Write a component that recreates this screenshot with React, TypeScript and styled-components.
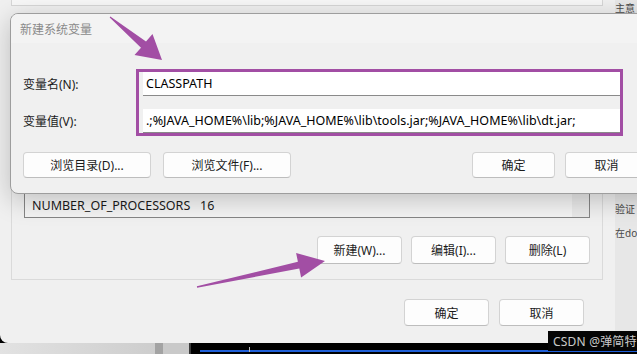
import React from 'react';
import styled, { createGlobalStyle } from 'styled-components';

const UI_FONT = `'Noto Sans', 'Noto Sans CJK SC', sans-serif`;
const PURPLE = '#a24ea4';

const GlobalStyle = createGlobalStyle`
  html, body {
    margin: 0;
    padding: 0;
    background: #000;
  }
  body {
    font-family: ${UI_FONT};
  }
  * {
    box-sizing: border-box;
  }
`;

const systemVars = [
  { name: 'JAVA_HOME', value: 'C:\\Program Files\\Java\\jdk1.8.0_202' },
  { name: 'NUMBER_OF_PROCESSORS', value: '16' },
];

const App = () => {
  return (
    <>
      <GlobalStyle />
      <Screen>
        <BackWindow>
          <BackLine top={-4}>主意</BackLine>
          <BackLine top={177}>验证</BackLine>
          <BackLine top={0}>在do</BackLine>
        </BackWindow>

        <TaskStrip>
          <StripPart width={155} bg="linear-gradient(90deg, #e2e2e2, #cdcdcd)" />
          <StripPart width={8} bg="#a3a3a3" />
          <StripPart width={26} bg="#c9c9c9" />
          <StripPart width={2} bg="#3a3a3a" />
          <TaskTrack>
            <BlueLine />
          </TaskTrack>
        </TaskStrip>

        <ParentWindow>
          <UserGroupTail />
          <SysGroup>
            <ListBox>
              <ListRows>
                {systemVars.map((v) => (
                  <ListRow key={v.name}>
                    <span>{v.name}</span>
                    <span>{v.value}</span>
                  </ListRow>
                ))}
              </ListRows>
              <ScrollTrack />
            </ListBox>
            <ButtonRow gap={9}>
              <Button width={85} height={28}>新建(W)...</Button>
              <Button width={85} height={28}>编辑(I)...</Button>
              <Button width={85} height={28}>删除(L)</Button>
            </ButtonRow>
          </SysGroup>
          <FooterRow>
            <Button width={85} height={27}>确定</Button>
            <Button width={85} height={27}>取消</Button>
          </FooterRow>
        </ParentWindow>

        <Dialog>
          <TitleBar>新建系统变量</TitleBar>
          <DialogBody>
            <FormGrid>
              <FieldLabel>变量名(N):</FieldLabel>
              <TextField>CLASSPATH</TextField>
              <FieldLabel>变量值(V):</FieldLabel>
              <TextField>
                .;%JAVA_HOME%\lib;%JAVA_HOME%\lib\tools.jar;%JAVA_HOME%\lib\dt.jar;
              </TextField>
            </FormGrid>
            <DialogButtons>
              <ButtonGroup gap={12}>
                <Button width={128} height={26}>浏览目录(D)...</Button>
                <Button width={128} height={26}>浏览文件(F)...</Button>
              </ButtonGroup>
              <ButtonGroup gap={10}>
                <Button width={83} height={26}>确定</Button>
                <Button width={83} height={26}>取消</Button>
              </ButtonGroup>
            </DialogButtons>
          </DialogBody>
        </Dialog>

        <Highlight />

        <ArrowLayer viewBox="0 0 637 354">
          <polygon
            fill={PURPLE}
            points="110.3,16.6 146,41.6 152.5,34 162,60 134.5,55 141,47.8 109.7,17.4"
          />
          <polygon
            fill={PURPLE}
            points="197.1,287.7 299.3,268.6 301.1,277.4 325,261 296.1,253 297.9,261.8 196.9,286.3"
          />
        </ArrowLayer>

        <Watermark>CSDN @弹简特</Watermark>
      </Screen>
    </>
  );
};

const Screen = styled.div`
  position: relative;
  width: 637px;
  height: 354px;
  overflow: hidden;
  background: #000;
  font-family: ${UI_FONT};
`;

const BackWindow = styled.div`
  position: absolute;
  left: 590px;
  top: 0;
  width: 60px;
  height: 331px;
  padding-left: 25px;
  background: #e7e7e7;
  display: flex;
  flex-direction: column;
  color: #4a4a4a;
  font-size: 10px;
  line-height: 24px;
  white-space: nowrap;
`;

const BackLine = styled.div<{ top: number }>`
  margin-top: ${({ top }) => top}px;
`;

const TaskStrip = styled.div`
  position: absolute;
  left: 0;
  right: 0;
  bottom: 0;
  height: 11px;
  display: flex;
`;

const StripPart = styled.div<{ width: number; bg: string }>`
  width: ${({ width }) => width}px;
  background: ${({ bg }) => bg};
`;

const TaskTrack = styled.div`
  flex: 1;
  background: #000;
  display: flex;
  align-items: flex-end;
  padding: 0 0 2px 9px;
`;

const BlueLine = styled.div`
  position: relative;
  flex: 1;
  height: 2px;
  background: #1f5fd8;

  &::after {
    content: '';
    position: absolute;
    left: 49px;
    bottom: 0;
    width: 1px;
    height: 5px;
    background: #b8b8b8;
  }
`;

const ParentWindow = styled.div`
  position: absolute;
  left: 0;
  top: 0;
  width: 615px;
  height: 343px;
  padding: 0 12px 0 11px;
  background: #f0f0f0;
  border-radius: 0 0 8px 8px;
  display: flex;
  flex-direction: column;
`;

const UserGroupTail = styled.div`
  height: 6px;
  border: 1px solid #d6d6d6;
  border-top: none;
  background: #f7f7f7;
`;

const SysGroup = styled.div`
  margin-top: 10px;
  height: 264px;
  border: 1px solid #dadada;
  padding: 12px 12px 15px 12px;
  display: flex;
  flex-direction: column;
`;

const ListBox = styled.div`
  flex: 1;
  border: 1px solid #858585;
  background: #f4f4f4;
  display: flex;
`;

const ListRows = styled.div`
  flex: 1;
  display: flex;
  flex-direction: column;
  justify-content: flex-end;
  padding-bottom: 2px;
`;

const ListRow = styled.div`
  display: grid;
  grid-template-columns: 168px 1fr;
  height: 20px;
  align-items: center;
  padding-left: 7px;
  font-size: 12.5px;
  color: #1a1a1a;
  white-space: nowrap;
`;

const ScrollTrack = styled.div`
  width: 17px;
  background: #e9e9e9;
`;

const ButtonRow = styled.div<{ gap: number }>`
  margin-top: 18px;
  display: flex;
  justify-content: flex-end;
  gap: ${({ gap }) => gap}px;
`;

const FooterRow = styled.div`
  margin-top: 19px;
  padding-right: 19px;
  display: flex;
  justify-content: flex-end;
  gap: 10px;
`;

const Button = styled.div<{ width: number; height: number }>`
  width: ${({ width }) => width}px;
  height: ${({ height }) => height}px;
  display: flex;
  align-items: center;
  justify-content: center;
  background: #fdfdfd;
  border: 1px solid #d3d3d3;
  border-bottom-color: #bdbdbd;
  border-radius: 4px;
  font-size: 12px;
  color: #1b1b1b;
  white-space: nowrap;
`;

const Dialog = styled.div`
  position: absolute;
  left: 10px;
  top: 13px;
  width: 652px;
  height: 181px;
  border: 1px solid #9d9d9d;
  border-radius: 8px;
  background: #f0f0f0;
  box-shadow: 0 6px 26px rgba(0, 0, 0, 0.22);
  overflow: hidden;
  display: flex;
  flex-direction: column;
`;

const TitleBar = styled.div`
  height: 29px;
  padding-left: 9px;
  display: flex;
  align-items: center;
  background: #f3f3f3;
  color: #8a8a8a;
  font-size: 12px;
`;

const DialogBody = styled.div`
  flex: 1;
  padding: 29px 13px 15px 12px;
  display: flex;
  flex-direction: column;
`;

const FormGrid = styled.div`
  display: grid;
  grid-template-columns: 120px 1fr;
  row-gap: 13px;
  align-items: center;
  padding-right: 27px;
`;

const FieldLabel = styled.div`
  font-size: 12px;
  color: #1b1b1b;
  white-space: nowrap;
`;

const TextField = styled.div`
  height: 24px;
  padding-left: 3px;
  display: flex;
  align-items: center;
  background: #fff;
  border-bottom: 1px solid #8a8a8a;
  font-size: 12.5px;
  color: #000;
  white-space: nowrap;
  overflow: hidden;
`;

const DialogButtons = styled.div`
  margin-top: 19px;
  display: flex;
  justify-content: space-between;
`;

const ButtonGroup = styled.div<{ gap: number }>`
  display: flex;
  gap: ${({ gap }) => gap}px;
`;

const Highlight = styled.div`
  position: absolute;
  left: 136px;
  top: 69px;
  width: 487px;
  height: 67px;
  border: 3px solid ${PURPLE};
`;

const ArrowLayer = styled.svg`
  position: absolute;
  left: 0;
  top: 0;
  width: 637px;
  height: 354px;
  pointer-events: none;
`;

const Watermark = styled.div`
  position: absolute;
  left: 548px;
  top: 331px;
  padding: 3px 6px 2px 5px;
  background: #050505;
  font-size: 12px;
  line-height: 15px;
  letter-spacing: 0.2px;
  color: rgba(255, 255, 255, 0.8);
  white-space: nowrap;
`;

export default App;
